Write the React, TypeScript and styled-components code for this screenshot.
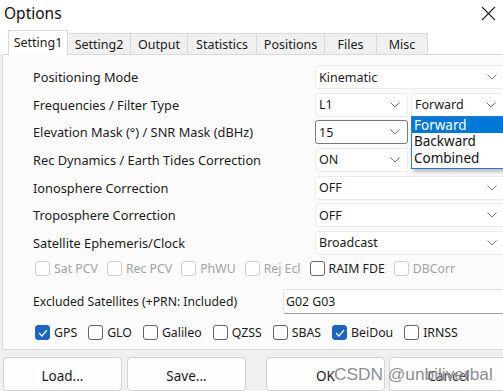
import React from "react";
import styled, { createGlobalStyle } from "styled-components";

const Global = createGlobalStyle`
  html, body { margin: 0; padding: 0; background: #ffffff; }
  body {
    font-family: "Noto Sans", "Open Sans", sans-serif;
    font-size: 12px;
    color: #1b1b1b;
    overflow: hidden;
  }
  * { box-sizing: border-box; }
`;

const Window = styled.div`
  width: 503px;
  height: 391px;
  position: relative;
  overflow: hidden;
  background: #f0f0f0;
  display: flex;
  flex-direction: column;
`;

const Top = styled.div`
  background: #ffffff;
  display: flex;
  flex-direction: column;
`;

const TitleBar = styled.div`
  height: 28px;
  display: flex;
  align-items: center;
  justify-content: space-between;
  padding: 0 7px 2px 4px;
  font-size: 15.5px;
  color: #111;
`;

const TabStrip = styled.div`
  height: 27px;
  display: flex;
  align-items: flex-end;
  padding-left: 9px;
`;

const Tab = styled.div<{ $w: number; $active?: boolean }>`
  width: ${(p) => p.$w}px;
  height: ${(p) => (p.$active ? 25 : 22)}px;
  display: flex;
  align-items: center;
  justify-content: center;
  font-size: 12.5px;
  color: #1b1b1b;
  background: ${(p) => (p.$active ? "#ffffff" : "#f0f0f0")};
  border: 1px solid #dadada;
  border-bottom: ${(p) => (p.$active ? "none" : "1px solid #dadada")};
  margin-left: -1px;
  position: relative;
  z-index: ${(p) => (p.$active ? 2 : 1)};
  padding-bottom: ${(p) => (p.$active ? 2 : 0)}px;
`;

const Panel = styled.div`
  height: 300px;
  margin-left: 2px;
  margin-top: -1px;
  background: #fbfbfb;
  border: 1px solid #dadada;
  border-right: none;
  padding: 10px 0 0 31px;
  display: flex;
  flex-direction: column;
`;

const Form = styled.div`
  display: grid;
  grid-template-columns: 281px 190px;
  grid-auto-rows: 24px;
  row-gap: 3.67px;
  align-items: center;
`;

const Label = styled.div<{ $size?: number }>`
  font-size: ${(p) => p.$size ?? 12.8}px;
  white-space: nowrap;
  color: #1b1b1b;
  margin-left: -1px;
`;

const Pair = styled.div`
  display: grid;
  grid-template-columns: 93px 93px;
  column-gap: 3px;
  height: 24px;
`;

const Combo = styled.div<{ $focus?: boolean }>`
  height: 24px;
  position: relative;
  background: #ffffff;
  border: 1px solid ${(p) => (p.$focus ? "#7a7a7a" : "#ececec")};
  border-radius: 3px;
  display: flex;
  align-items: center;
  justify-content: space-between;
  padding: 0 7px 0 3px;
  font-size: 12.5px;
  color: #1b1b1b;
`;

const DropList = styled.div`
  position: absolute;
  top: 100%;
  left: -1px;
  width: 94px;
  background: #ffffff;
  border: 1px solid #2a7bd0;
  box-shadow: 2px 3px 4px rgba(0, 0, 0, 0.25);
  z-index: 5;
  padding: 0 0 1px 0;
`;

const DropItem = styled.div<{ $sel?: boolean }>`
  height: 16.7px;
  line-height: 16px;
  font-size: 13.5px;
  padding-left: 2px;
  color: ${(p) => (p.$sel ? "#ffffff" : "#111")};
  background: ${(p) => (p.$sel ? "#0078d7" : "transparent")};
`;

const CheckRow = styled.div<{ $gap: number; $mt: number }>`
  display: flex;
  align-items: center;
  gap: ${(p) => p.$gap}px;
  margin-top: ${(p) => p.$mt}px;
  margin-left: 1px;
  height: 16px;
`;

const CheckItem = styled.label<{ $disabled?: boolean }>`
  display: flex;
  align-items: center;
  gap: 4px;
  font-size: 12.3px;
  white-space: nowrap;
  color: ${(p) => (p.$disabled ? "#a3a3a3" : "#1b1b1b")};
`;

const Box = styled.span<{ $state: "off" | "on" | "dis" }>`
  width: 15px;
  height: 15px;
  border-radius: 3px;
  display: inline-flex;
  align-items: center;
  justify-content: center;
  background: ${(p) => (p.$state === "on" ? "#1a66c2" : "#ffffff")};
  border: 1px solid
    ${(p) => (p.$state === "on" ? "#1a66c2" : p.$state === "dis" ? "#cfcfcf" : "#666666")};
`;

const ExclRow = styled.div`
  display: grid;
  grid-template-columns: 249px 221px;
  align-items: center;
  margin-top: 12px;
  height: 25px;
`;

const TextInput = styled.div`
  height: 25px;
  background: #ffffff;
  border: 1px solid #e3e3e3;
  border-bottom-color: #9a9a9a;
  border-radius: 3px 0 0 3px;
  display: flex;
  align-items: center;
  padding-left: 2px;
  font-size: 12.3px;
`;

const ButtonBar = styled.div`
  display: flex;
  padding: 7px 0 0 3px;
`;

const Button = styled.div<{ $ml: number }>`
  width: 119px;
  height: 34px;
  margin-left: ${(p) => p.$ml}px;
  background: #fdfdfd;
  border: 1px solid #d3d3d3;
  border-radius: 4px;
  display: flex;
  align-items: flex-start;
  justify-content: center;
  padding-top: 9px;
  font-size: 13.5px;
  color: #1b1b1b;
  flex-shrink: 0;
`;

const Watermark = styled.div`
  position: absolute;
  left: 334px;
  top: 364px;
  font-family: "Liberation Sans", Arial, sans-serif;
  font-size: 17.3px;
  color: rgba(120, 120, 120, 0.85);
  white-space: nowrap;
  text-shadow: 0 0 2px rgba(255, 255, 255, 0.8);
`;

const Chevron = () => (
  <svg width="10" height="6" viewBox="0 0 10 6">
    <path d="M0.5 0.5 L5 5 L9.5 0.5" fill="none" stroke="#7a7a7a" strokeWidth="1" />
  </svg>
);

const Check = () => (
  <svg width="10" height="8" viewBox="0 0 10 8">
    <path d="M1 4 L4 7 L9 1" fill="none" stroke="#ffffff" strokeWidth="1.2" />
  </svg>
);

const CloseIcon = () => (
  <svg width="15" height="15" viewBox="0 0 15 15">
    <path d="M1 1 L14 14 M14 1 L1 14" stroke="#222" strokeWidth="1.1" />
  </svg>
);

const Select: React.FC<{ value: string; focus?: boolean; children?: React.ReactNode }> = ({
  value,
  focus,
  children,
}) => (
  <Combo $focus={focus}>
    <span>{value}</span>
    <Chevron />
    {children}
  </Combo>
);

const CB: React.FC<{ label: string; state: "off" | "on" | "dis" }> = ({ label, state }) => (
  <CheckItem $disabled={state === "dis"}>
    <Box $state={state}>{state === "on" && <Check />}</Box>
    {label}
  </CheckItem>
);

const tabs: [string, number][] = [
  ["Setting1", 60],
  ["Setting2", 64],
  ["Output", 58],
  ["Statistics", 70],
  ["Positions", 69],
  ["Files", 53],
  ["Misc", 52],
];

export default function App() {
  return (
    <>
      <Global />
      <Window>
        <Top>
          <TitleBar>
            <span>Options</span>
            <CloseIcon />
          </TitleBar>
          <TabStrip>
            {tabs.map(([t, w], i) => (
              <Tab key={t} $w={w} $active={i === 0}>
                {t}
              </Tab>
            ))}
          </TabStrip>
        </Top>
        <Panel>
          <Form>
            <Label>Positioning Mode</Label>
            <Select value="Kinematic" />
            <Label>Frequencies / Filter Type</Label>
            <Pair>
              <Select value="L1" />
              <Select value="Forward">
                <DropList>
                  <DropItem $sel>Forward</DropItem>
                  <DropItem>Backward</DropItem>
                  <DropItem>Combined</DropItem>
                </DropList>
              </Select>
            </Pair>
            <Label>Elevation Mask (°) / SNR Mask (dBHz)</Label>
            <Pair>
              <Select value="15" focus />
            </Pair>
            <Label>Rec Dynamics / Earth Tides Correction</Label>
            <Pair>
              <Select value="ON" />
            </Pair>
            <Label>Ionosphere Correction</Label>
            <Select value="OFF" />
            <Label>Troposphere Correction</Label>
            <Select value="OFF" />
            <Label>Satellite Ephemeris/Clock</Label>
            <Select value="Broadcast" />
          </Form>
          <CheckRow $gap={9} $mt={6}>
            <CB label="Sat PCV" state="dis" />
            <CB label="Rec PCV" state="dis" />
            <CB label="PhWU" state="dis" />
            <CB label="Rej Ecl" state="dis" />
            <CB label="RAIM FDE" state="off" />
            <CB label="DBCorr" state="dis" />
          </CheckRow>
          <ExclRow>
            <Label $size={12.2}>Excluded Satellites (+PRN: Included)</Label>
            <TextInput>G02 G03</TextInput>
          </ExclRow>
          <CheckRow $gap={11} $mt={11}>
            <CB label="GPS" state="on" />
            <CB label="GLO" state="off" />
            <CB label="Galileo" state="off" />
            <CB label="QZSS" state="off" />
            <CB label="SBAS" state="off" />
            <CB label="BeiDou" state="on" />
            <CB label="IRNSS" state="off" />
          </CheckRow>
        </Panel>
        <ButtonBar>
          <Button $ml={0}>Load...</Button>
          <Button $ml={5}>Save...</Button>
          <Button $ml={20}>OK</Button>
          <Button $ml={4}>Cancel</Button>
        </ButtonBar>
        <Watermark>CSDN @unbiliverbal</Watermark>
      </Window>
    </>
  );
}
